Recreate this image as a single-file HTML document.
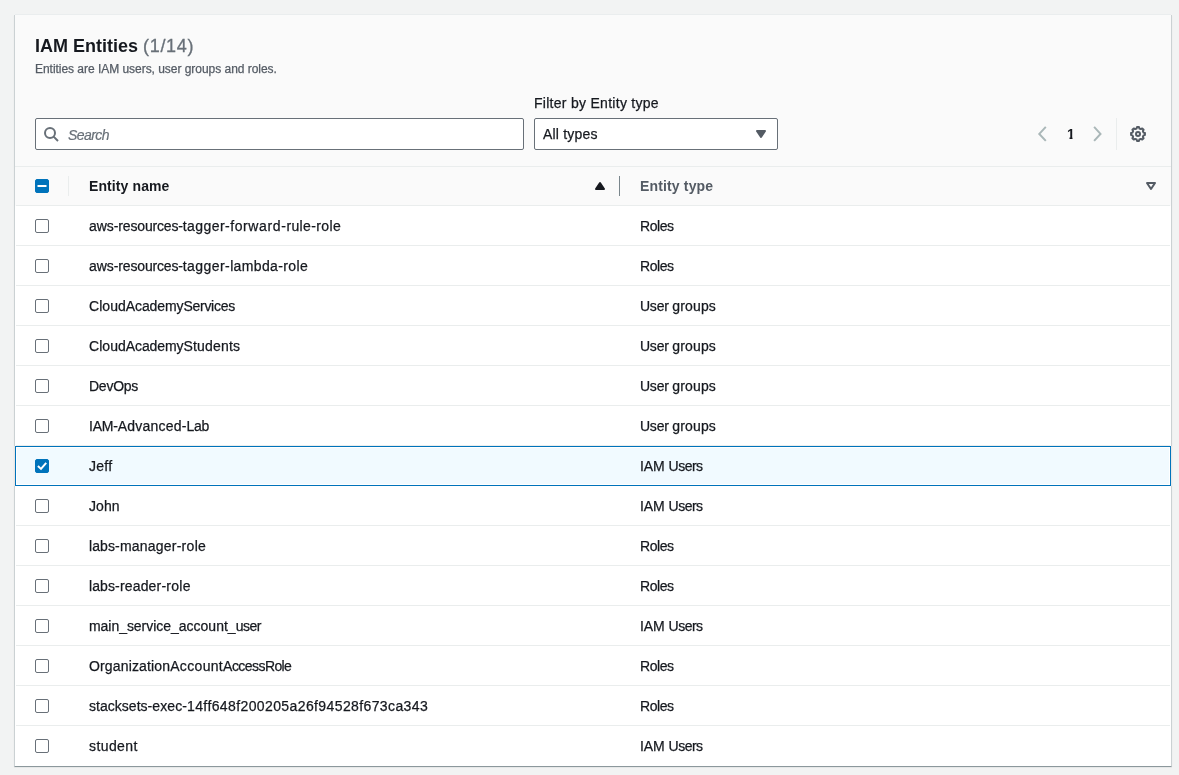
<!DOCTYPE html>
<html lang="en">
<head>
<meta charset="utf-8">
<title>IAM Entities</title>
<style>
*{box-sizing:border-box;margin:0;padding:0}
html,body{width:1179px;height:775px;overflow:hidden}
body{background:#f2f3f3;font-family:"Liberation Sans",Arial,sans-serif;color:#16191f;font-size:14px;position:relative}
.card{position:absolute;left:15px;top:15px;width:1156px;height:751px;background:#fff;}
.sh{position:absolute}
.head{position:absolute;left:0;top:0;width:1156px;height:151px;background:#fafafa}
h2{position:absolute;left:20px;top:20px;font-size:18px;line-height:22px;font-weight:700;color:#16191f;white-space:nowrap}
h2 span{font-weight:400;color:#687078;letter-spacing:.7px;-webkit-text-stroke:.3px currentColor}
.desc{position:absolute;left:20px;top:45.5px;font-size:12px;line-height:16px;color:#545b64;white-space:nowrap;letter-spacing:-.035px}
.search{position:absolute;left:20px;top:103px;width:489px;height:32px;border:1px solid #687078;border-radius:2px;background:#fff}
.search svg{position:absolute;left:7px;top:7px}
.search span{position:absolute;left:32px;top:6px;font-style:italic;color:#687078;font-size:14px;line-height:20px;letter-spacing:-.55px;-webkit-text-stroke:.2px currentColor}
.flabel{position:absolute;left:519px;top:79px;font-size:14px;line-height:18px;color:#16191f;white-space:nowrap;letter-spacing:.28px}
.select{position:absolute;left:519px;top:103px;width:244px;height:32px;border:1px solid #687078;border-radius:2px;background:#fff}
.select span{position:absolute;left:7.500px;top:5px;font-size:14px;line-height:20px;color:#16191f;letter-spacing:.2px}
.select svg{position:absolute;left:218px;top:7px}
.pager{position:absolute;top:103px;left:0;width:1156px;height:32px}
.pager svg{position:absolute}
.pager b{position:absolute;left:1052px;top:7px;font-size:14px;line-height:18px;font-weight:700;color:#16191f;clip-path:polygon(0 0,100% 0,100% 12px,5.5px 12px,5.5px 100%,2.5px 100%,2.5px 12px,0 12px)}
.pager .sep{position:absolute;left:1101px;top:0;width:1px;height:32px;background:#eaeded}
.thead{position:absolute;left:0;top:151px;width:1156px;height:40px;background:#fafafa;border-top:1px solid #eaeded}
.thead::after{content:"";position:absolute;left:1px;right:1px;bottom:0;height:1px;background:#eaeded}
.thead .t{position:absolute;top:10px;font-size:14px;line-height:18px;font-weight:700;white-space:nowrap}
.thead .v{position:absolute;top:9px;width:1px;height:20px;background:#eaeded}
.row{position:absolute;left:0;width:1156px;height:40px;background:#fff}
.row::after{content:"";position:absolute;left:1px;right:1px;bottom:0;height:1px;background:#eaeded}
.row .n,.row .ty{position:absolute;top:11px;font-size:14px;line-height:18px;white-space:nowrap;color:#16191f}
.row .n{left:73.500px}
.row .ty{left:624.500px}
.cb{position:absolute;left:20px;top:13px;width:14px;height:14px;border:1px solid #687078;border-radius:2px;background:#fff}
.cb.on{background:#0073bb;border-color:#0073bb}
.cb svg{position:absolute;left:-1px;top:-1px}
.row.sel{background:#f1faff;border:1px solid #0073bb;box-shadow:inset 0 0 0 1px #fff}
.row.sel::after,.row.last::after{display:none}
.row.sel .n{left:72.500px;top:10px}.row.sel .ty{left:623.500px;top:10px}.row.sel .cb{left:19px;top:12px}
h2,.desc,.search span,.flabel,.select span,.pager b,.thead .t,.row .n,.row .ty{will-change:transform}
.row .n,.row .ty,.flabel,.select span,.desc{-webkit-text-stroke:.25px currentColor}
</style>
</head>
<body>
<div class="sh" style="left:15px;top:14px;width:1156px;height:1px;background:#eaedee"></div>
<div class="sh" style="left:14px;top:15px;width:1px;height:751px;background:#cbd1d3"></div>
<div class="sh" style="left:13px;top:16px;width:1px;height:751px;background:#eff0f0"></div>
<div class="sh" style="left:1171px;top:15px;width:1px;height:751px;background:#cbd1d3"></div>
<div class="sh" style="left:1172px;top:16px;width:1px;height:751px;background:#eff0f0"></div>
<div class="sh" style="left:14px;top:766px;width:1158px;height:1px;background:#b4bcbf"></div>
<div class="sh" style="left:15px;top:766px;width:1156px;height:1px;background:#8c989c"></div>
<div class="sh" style="left:14px;top:767px;width:1158px;height:1px;background:#e6e8e8"></div>
<div class="sh" style="left:14px;top:446px;width:1px;height:40px;background:#e9e6e4"></div>
<div class="sh" style="left:1171px;top:446px;width:1px;height:40px;background:#e9e6e4"></div>
<div class="card">
  <div class="head">
    <h2>IAM Entities <span>(1/14)</span></h2>
    <div class="desc">Entities are IAM users, user groups and roles.</div>
    <div class="search">
      <svg width="16" height="16" viewBox="0 0 16 16" fill="none" stroke="#687078" stroke-width="2"><circle cx="7" cy="7" r="5"/><path d="M10.600 10.600 L15 15"/></svg>
      <span>Search</span>
    </div>
    <div class="flabel">Filter by Entity type</div>
    <div class="select"><span>All types</span><svg width="16" height="16" viewBox="0 0 16 16"><path d="M4 5h8l-4 6z" fill="#545b64" stroke="#545b64" stroke-width="2" stroke-linejoin="round"/></svg></div>
    <div class="pager">
      <svg style="left:1015px;top:7px" width="24" height="18" viewBox="0 0 24 18" fill="none" stroke="#aab7b8" stroke-width="2"><path d="M15.800 1.900 L9.300 8.900 L15.800 15.900"/></svg>
      <b>1</b>
      <svg style="left:1070px;top:7px" width="24" height="18" viewBox="0 0 24 18" fill="none" stroke="#aab7b8" stroke-width="2"><path d="M9.100 1.900 L15.500 8.900 L9.100 15.900"/></svg>
      <div class="sep"></div>
      <svg style="left:1115px;top:8px" width="16" height="16" viewBox="0 0 16 16" fill="none" stroke="#545b64" stroke-width="2" stroke-linejoin="round"><circle cx="8" cy="8" r="2"/><path d="M6.62 2.47 L7.03 1.07 L8.97 1.07 L9.38 2.47 L10.94 3.11 L12.21 2.41 L13.59 3.79 L12.89 5.06 L13.53 6.62 L14.93 7.03 L14.93 8.97 L13.53 9.38 L12.89 10.94 L13.59 12.21 L12.21 13.59 L10.94 12.89 L9.38 13.53 L8.97 14.93 L7.03 14.93 L6.62 13.53 L5.06 12.89 L3.79 13.59 L2.41 12.21 L3.11 10.94 L2.47 9.38 L1.07 8.97 L1.07 7.03 L2.47 6.62 L3.11 5.06 L2.41 3.79 L3.79 2.41 L5.06 3.11z"/></svg>
    </div>
  </div>
  <div class="thead">
    <div class="cb on" style="top:12px"><svg width="14" height="14" viewBox="0 0 14 14"><path d="M2.500 7h9" stroke="#fff" stroke-width="2" fill="none"/></svg></div>
    <div class="v" style="left:53px"></div>
    <div class="t" style="left:74px;color:#16191f;letter-spacing:.1px">Entity name</div>
    <svg style="position:absolute;left:577px;top:11.400px" width="16" height="16" viewBox="0 0 16 16"><path d="M4 11h8L8 5z" fill="#16191f" stroke="#16191f" stroke-width="2" stroke-linejoin="round"/></svg>
    <div class="v" style="left:604px;background:#7a868c"></div>
    <div class="t" style="left:625px;color:#545b64;letter-spacing:.15px">Entity type</div>
    <svg style="position:absolute;left:1128px;top:11px" width="16" height="16" viewBox="0 0 16 16"><path d="M4 5h8l-4 6z" fill="none" stroke="#545b64" stroke-width="2" stroke-linejoin="round"/></svg>
  </div>
  <div class="row" style="top:191px"><div class="cb"></div><div class="n" title="aws-resources-tagger-forward-rule-role"><span style="letter-spacing:-0.06px">aws-</span><span style="letter-spacing:-0.17px">resources-</span><span style="letter-spacing:0.43px">tagger-</span><span style="letter-spacing:0.62px">forward-</span><span style="letter-spacing:0.34px">rule-</span><span style="letter-spacing:0.44px">role</span></div><div class="ty" title="Roles"><span style="letter-spacing:-.45px">Roles</span></div></div>
  <div class="row" style="top:231px"><div class="cb"></div><div class="n" title="aws-resources-tagger-lambda-role"><span style="letter-spacing:-0.06px">aws-</span><span style="letter-spacing:-0.17px">resources-</span><span style="letter-spacing:0.43px">tagger-</span><span style="letter-spacing:0.35px">lambda-</span><span style="letter-spacing:0.44px">role</span></div><div class="ty" title="Roles"><span style="letter-spacing:-.45px">Roles</span></div></div>
  <div class="row" style="top:271px"><div class="cb"></div><div class="n" title="CloudAcademyServices"><span style="letter-spacing:0.04px">Cloud</span><span style="letter-spacing:-0.11px">Academy</span><span style="letter-spacing:-0.26px">Services</span></div><div class="ty" title="User groups"><span style="letter-spacing:-.24px">User </span><span style="letter-spacing:.16px">groups</span></div></div>
  <div class="row" style="top:311px"><div class="cb"></div><div class="n" title="CloudAcademyStudents"><span style="letter-spacing:0.04px">Cloud</span><span style="letter-spacing:-0.11px">Academy</span><span style="letter-spacing:0.21px">Students</span></div><div class="ty" title="User groups"><span style="letter-spacing:-.24px">User </span><span style="letter-spacing:.16px">groups</span></div></div>
  <div class="row" style="top:351px"><div class="cb"></div><div class="n" title="DevOps"><span style="letter-spacing:-0.25px">DevOps</span></div><div class="ty" title="User groups"><span style="letter-spacing:-.24px">User </span><span style="letter-spacing:.16px">groups</span></div></div>
  <div class="row" style="top:391px"><div class="cb"></div><div class="n" title="IAM-Advanced-Lab"><span style="letter-spacing:-0.21px">IAM-</span><span style="letter-spacing:0.21px">Advanced-</span><span style="letter-spacing:-0.30px">Lab</span></div><div class="ty" title="User groups"><span style="letter-spacing:-.24px">User </span><span style="letter-spacing:.16px">groups</span></div></div>
  <div class="row sel" style="top:431px"><div class="cb on"><svg width="14" height="14" viewBox="0 0 14 14"><path d="M2.900 7 L6 9.900 L11.200 3.900" stroke="#fff" stroke-width="2" fill="none"/></svg></div><div class="n" title="Jeff"><span style="letter-spacing:0.25px">Jeff</span></div><div class="ty" title="IAM Users"><span style="letter-spacing:-.06px">IAM </span><span style="letter-spacing:-.5px">Users</span></div></div>
  <div class="row" style="top:471px"><div class="cb"></div><div class="n" title="John"><span style="letter-spacing:0.07px">John</span></div><div class="ty" title="IAM Users"><span style="letter-spacing:-.06px">IAM </span><span style="letter-spacing:-.5px">Users</span></div></div>
  <div class="row" style="top:511px"><div class="cb"></div><div class="n" title="labs-manager-role"><span style="letter-spacing:0.11px">labs-</span><span style="letter-spacing:0.22px">manager-</span><span style="letter-spacing:0.30px">role</span></div><div class="ty" title="Roles"><span style="letter-spacing:-.45px">Roles</span></div></div>
  <div class="row" style="top:551px"><div class="cb"></div><div class="n" title="labs-reader-role"><span style="letter-spacing:0.11px">labs-</span><span style="letter-spacing:0.17px">reader-</span><span style="letter-spacing:0.30px">role</span></div><div class="ty" title="Roles"><span style="letter-spacing:-.45px">Roles</span></div></div>
  <div class="row" style="top:591px"><div class="cb"></div><div class="n" title="main_service_account_user"><span style="letter-spacing:-0.05px">main_</span><span style="letter-spacing:-0.03px">service_</span><span style="letter-spacing:-0.00px">account_</span><span style="letter-spacing:-0.47px">user</span></div><div class="ty" title="IAM Users"><span style="letter-spacing:-.06px">IAM </span><span style="letter-spacing:-.5px">Users</span></div></div>
  <div class="row" style="top:631px"><div class="cb"></div><div class="n" title="OrganizationAccountAccessRole"><span style="letter-spacing:0.15px">Organization</span><span style="letter-spacing:0.33px">Account</span><span style="letter-spacing:-0.54px">Access</span><span style="letter-spacing:-0.68px">Role</span></div><div class="ty" title="Roles"><span style="letter-spacing:-.45px">Roles</span></div></div>
  <div class="row" style="top:671px"><div class="cb"></div><div class="n" title="stacksets-exec-14ff648f200205a26f94528f673ca343"><span style="letter-spacing:0.03px">stacksets-</span><span style="letter-spacing:0.09px">exec-</span><span style="letter-spacing:0.39px">14ff648f200205a26f94528f673ca343</span></div><div class="ty" title="Roles"><span style="letter-spacing:-.45px">Roles</span></div></div>
  <div class="row last" style="top:711px"><div class="cb"></div><div class="n" title="student"><span style="letter-spacing:0.40px">student</span></div><div class="ty" title="IAM Users"><span style="letter-spacing:-.06px">IAM </span><span style="letter-spacing:-.5px">Users</span></div></div>
</div>
</body>
</html>
